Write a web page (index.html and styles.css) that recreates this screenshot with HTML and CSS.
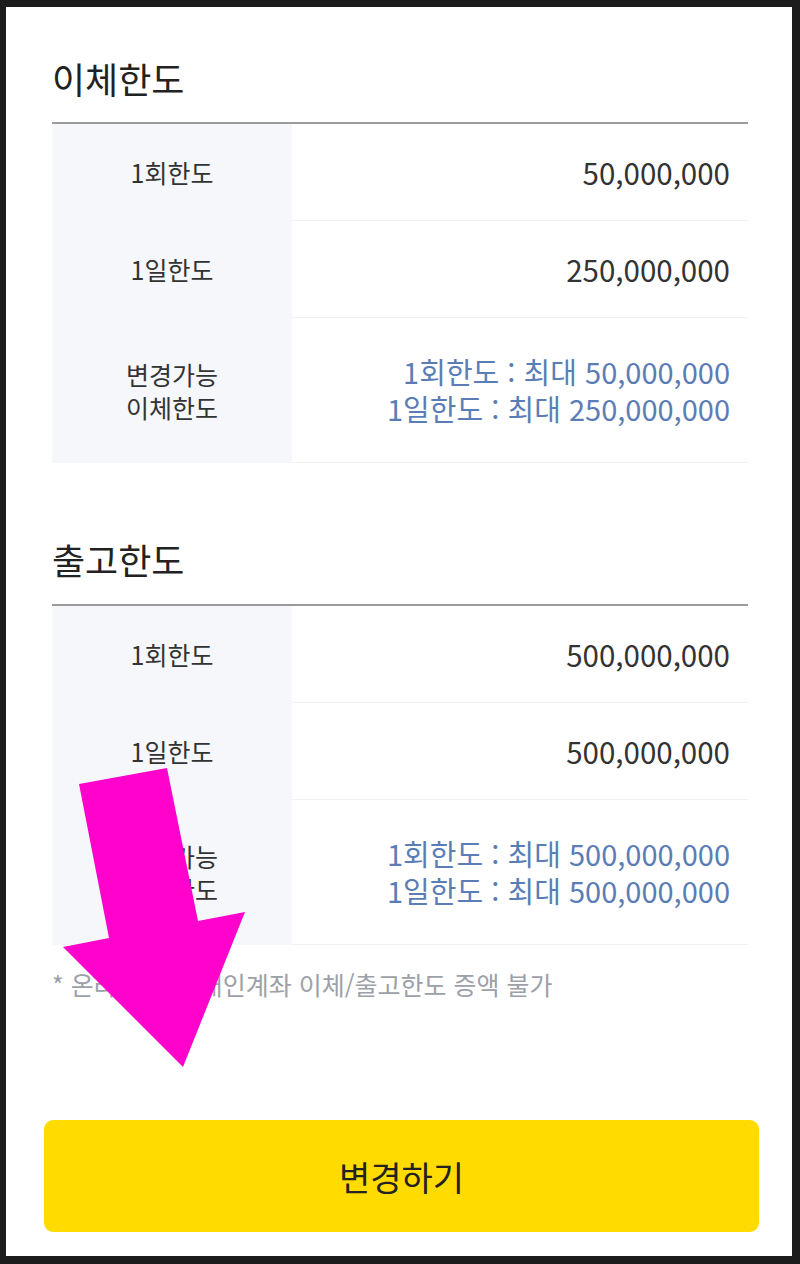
FILE: index.html
```html
<!DOCTYPE html>
<html lang="ko">
<head>
  <meta charset="UTF-8" />
  <title>한도 조회</title>
  <link rel="stylesheet" href="styles.css">
</head>
<body>

  <div class="screen">

    <!-- 이체한도 -->
    <h2 class="section-title">이체한도</h2>
    <div class="limit-table">
      <div class="row">
        <div class="label">1회한도</div>
        <div class="value">50,000,000</div>
      </div>
      <div class="row">
        <div class="label">1일한도</div>
        <div class="value">250,000,000</div>
      </div>
      <div class="row tall">
        <div class="label">변경가능<br>이체한도</div>
        <div class="value blue">1회한도 : 최대 50,000,000<br>1일한도 : 최대 250,000,000</div>
      </div>
    </div>

    <!-- 출고한도 -->
    <h2 class="section-title second">출고한도</h2>
    <div class="limit-table">
      <div class="row">
        <div class="label">1회한도</div>
        <div class="value">500,000,000</div>
      </div>
      <div class="row">
        <div class="label">1일한도</div>
        <div class="value">500,000,000</div>
      </div>
      <div class="row tall">
        <div class="label">변경가능<br>출고한도</div>
        <div class="value blue">1회한도 : 최대 500,000,000<br>1일한도 : 최대 500,000,000</div>
      </div>
    </div>

    <p class="note">* 온라인 개설 개인계좌 이체/출고한도 증액 불가</p>

    <button class="change-btn">변경하기</button>
  </div>

  <!-- annotation arrow drawn on top of the screenshot -->
  <svg class="pointer" viewBox="0 0 800 1264" width="800" height="1264">
    <polygon points="79,784 167,768 198,921 245,912 183,1067 63,947 109,938" fill="#ff03cc"/>
  </svg>

</body>
</html>
```

FILE: styles.css
```css
body, html {
  margin: 0;
  padding: 0;
  background: #1c1c1c;
  font-family: "Noto Sans CJK KR", "Noto Sans", sans-serif;
  color: #222;
}

.screen {
  margin: 7px 8px 8px 6px;
  height: 1249px;
  background: #fff;
  padding: 46px 44px 0 46px;
  box-sizing: border-box;
  display: flex;
  flex-direction: column;
}

/* Section headings */
.section-title {
  margin: 0 0 19px;
  font-size: 36px;
  line-height: 50px;
  font-weight: 400;
  color: #222;
}
.section-title.second {
  margin-top: 71px;
  margin-bottom: 20px;
}

/* Limit tables */
.limit-table {
  border-top: 2px solid #9b9b9b;
}
.row {
  display: grid;
  grid-template-columns: 240px 1fr;
  height: 97px;
}
.row.tall {
  height: 145px;
}
.label {
  background: #f5f7fa;
  display: flex;
  align-items: center;
  justify-content: center;
  text-align: center;
  font-size: 25px;
  line-height: 33px;
  color: #333;
}
.value {
  display: flex;
  align-items: center;
  justify-content: flex-end;
  text-align: right;
  padding: 0 18px;
  border-bottom: 1px solid #f2f2f2;
  font-size: 29.5px;
  line-height: 37px;
  color: #333;
}
.value.blue {
  color: #5b7db6;
  font-size: 29px;
}

/* Footnote */
.note {
  margin: 24px 0 0;
  font-size: 25px;
  line-height: 30px;
  color: #9ca0a8;
}

/* Yellow action button */
.change-btn {
  margin: 121px -11px 0 -8px;
  height: 112px;
  border: none;
  border-radius: 9px;
  background: #ffdb00;
  color: #222;
  font-family: inherit;
  font-size: 34px;
  cursor: pointer;
}

.pointer {
  position: absolute;
  top: 0;
  left: 0;
  pointer-events: none;
}
```
